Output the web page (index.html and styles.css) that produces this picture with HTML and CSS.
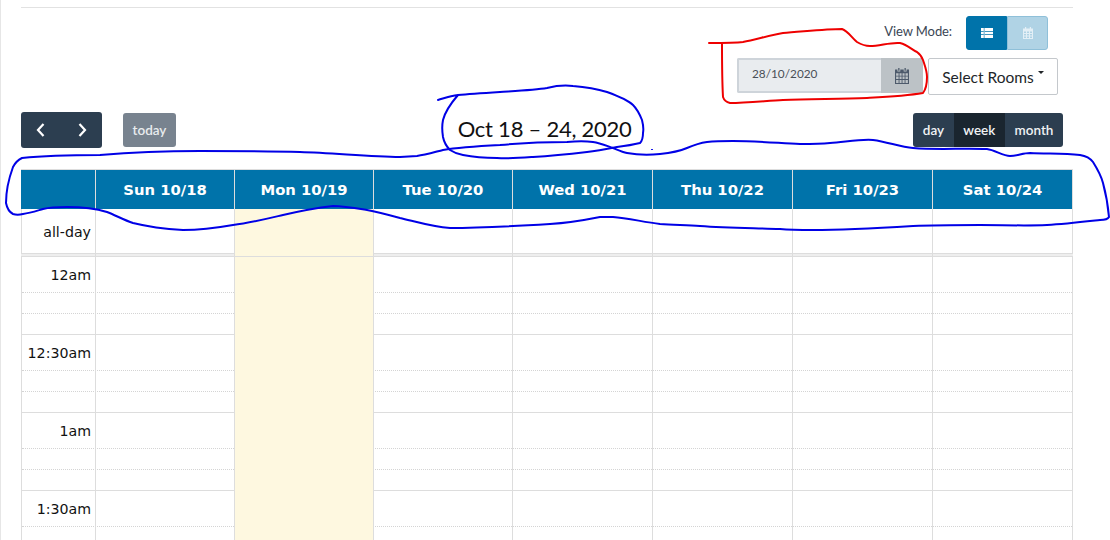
FILE: index.html
```html
<!DOCTYPE html>
<html lang="en">
<head>
<meta charset="utf-8">
<title>Room calendar</title>
<link rel="stylesheet" href="styles.css">
</head>
<body>
<div class="page">
  <div class="rule"></div>
  <div class="controls">
    <div class="view-row">
      <span class="view-label">View Mode:</span>
      <div class="view-group">
        <button class="view-btn active" aria-label="List">
          <svg class="icon" viewBox="0 0 12 10"><path d="M0 0h12v10H0zM0 3v.7h12V3zM0 6.300V7h12v-.7zM2.800 0v10h.6V0z" fill-rule="evenodd"/></svg>
        </button>
        <button class="view-btn inactive" aria-label="Calendar">
          <svg class="icon cal" viewBox="0 0 10 12"><path d="M2 0h1.200v1.500H6.800V0H8v1.500h2V12H0V1.500h2zM1 4.500v1.500h2V4.500zm3 0v1.500h2V4.500zm3 0v1.500h2V4.500zM1 7v1.500h2V7zm3 0v1.500h2V7zm3 0v1.500h2V7zM1 9.500V11h2V9.500zm3 0V11h2V9.500zm3 0V11h2V9.500z" fill-rule="evenodd"/></svg>
        </button>
      </div>
    </div>
    <div class="picker-row">
      <div class="date-picker">
        <span class="date-value">28/10/2020</span>
        <span class="date-addon">
          <svg class="addon-icon" viewBox="0 0 14 16"><path d="M3.200 0h1.300v2.800H3.200zM9.500 0h1.300v2.800H9.500zM0 1.500h2.400v2h2.900v-2h3.400v2h2.900v-2H14V16H0zM1.100 5.300v2.400h2.500V5.300zm3.400 0v2.400h2.100V5.300zm3 0v2.400h2.100V5.300zm3 0v2.400h2.400V5.300zM1.100 8.600v2.400h2.500V8.600zm3.400 0v2.400h2.100V8.600zm3 0v2.400h2.100V8.600zm3 0v2.400h2.400V8.600zM1.100 11.900v3h2.500v-3zm3.400 0v3h2.100v-3zm3 0v3h2.100v-3zm3 0v3h2.400v-3z" fill-rule="evenodd"/></svg>
        </span>
      </div>
      <button class="rooms-btn">Select Rooms<span class="caret"></span></button>
    </div>
  </div>
  <div class="toolbar">
    <div class="toolbar-left">
      <div class="nav-group">
        <button class="nav-btn" aria-label="Previous"><svg viewBox="0 0 10 16"><path d="M7.500 2 2 8l5.500 6"/></svg></button>
        <button class="nav-btn" aria-label="Next"><svg viewBox="0 0 10 16"><path d="m2.500 2 5.500 6-5.500 6"/></svg></button>
      </div>
      <button class="today-btn">today</button>
    </div>
    <h2 class="title">Oct 18 – 24, 2020</h2>
    <div class="range-group">
      <button class="range-btn">day</button>
      <button class="range-btn current">week</button>
      <button class="range-btn">month</button>
    </div>
  </div>
  <div class="calendar">
    <div class="cal-row head-row">
      <div class="head-cell"></div>
      <div class="head-cell">Sun 10/18</div>
      <div class="head-cell">Mon 10/19</div>
      <div class="head-cell">Tue 10/20</div>
      <div class="head-cell">Wed 10/21</div>
      <div class="head-cell">Thu 10/22</div>
      <div class="head-cell">Fri 10/23</div>
      <div class="head-cell">Sat 10/24</div>
    </div>
    <div class="cal-row allday-row">
      <div class="allday-label">all-day</div>
      <div class="day"></div>
      <div class="day today"></div>
      <div class="day"></div>
      <div class="day"></div>
      <div class="day"></div>
      <div class="day"></div>
      <div class="day"></div>
    </div>
    <div class="divider"></div>
    <div class="time-grid">
      <div class="slot major"><span class="time">12am</span></div>
      <div class="slot"></div>
      <div class="slot hour-end"></div>
      <div class="slot major"><span class="time">12:30am</span></div>
      <div class="slot"></div>
      <div class="slot hour-end"></div>
      <div class="slot major"><span class="time">1am</span></div>
      <div class="slot"></div>
      <div class="slot hour-end"></div>
      <div class="slot major"><span class="time">1:30am</span></div>
      <div class="slot"></div>
      <div class="slot hour-end"></div>
      <div class="columns">
        <div class="day"></div>
        <div class="day today"></div>
        <div class="day"></div>
        <div class="day"></div>
        <div class="day"></div>
        <div class="day"></div>
        <div class="day"></div>
      </div>
    </div>
  </div>
</div>
<svg class="scribbles" viewBox="0 0 1110 540" aria-hidden="true">
  <path class="ink-red" d="M709 43C720 43 735 43 743 42C755 40 770 35 783 33C800 32 825 29 842 29C848 31 852 38 857 42C862 45 866 46 870 46C880 46 890 42 900 43C908 45 912 50 917 52C921 55 922 57 923 60C925 66 927 71 927 77C927 84 926 89 923 93C905 96 885 97 867 98C840 99 810 99 783 100C765 101 745 103 730 103C726 102 724 100 723 97C722 80 722 60 722 43"/>
  <path class="ink-blue" d="M438 100C445 98 450 96 458 95C470 94 485 93 500 92C515 91 535 90 547 88C555 86 565 85 573 86C585 87 597 89 607 92C618 96 628 100 633 105C638 110 640 115 642 120C643 124 644 128 643 133C643 137 642 141 640 143C632 145 625 146 617 147C607 149 597 151 587 152C570 154 550 156 533 157C520 158 508 159 497 158C485 158 473 157 463 155C457 154 453 152 450 150C446 146 444 142 443 137C442 131 442 125 443 120C445 112 452 102 458 95"/>
  <path class="ink-blue" d="M22 158C50 155 75 155 100 155C135 152 165 151 200 151C235 151 270 151 300 152C335 153 370 157 400 157L417 156C425 155 435 152 443 150C460 147 480 146 500 145C522 143 545 142 567 142C577 141 586 141 593 142C600 143 607 146 613 148C618 150 622 152 627 153C638 155 650 155 660 154C670 153 680 151 687 148C694 145 700 143 707 142C716 141 725 141 733 141C755 141 778 143 800 144C810 144 820 144 830 143C845 142 860 139 873 140C888 142 900 147 913 148C938 150 962 148 987 149C995 150 1003 156 1010 156C1017 156 1023 153 1030 153C1047 154 1063 153 1080 155C1086 156 1090 158 1093 162C1098 170 1101 175 1103 183C1106 194 1108 206 1109 217C1108 219 1104 220 1100 220C1082 222 1065 224 1047 225C1025 226 1002 225 980 225C957 225 935 225 913 226C880 228 847 230 813 230C802 230 791 230 780 229C753 228 727 228 700 226C686 225 673 225 660 224C643 222 628 218 613 217C608 217 604 217 600 217C585 220 568 223 550 224C517 226 483 228 450 228C433 227 417 222 400 218C389 215 378 212 367 210C355 208 344 206 333 206C316 208 300 211 283 215C266 219 250 223 233 225C216 228 200 230 183 230C166 229 149 227 133 223C124 220 115 215 107 212C94 208 80 207 67 207C59 207 51 207 43 209C36 211 30 213 23 214C19 215 16 215 13 214C9 212 7 208 6 203C6 190 9 178 13 167C15 163 18 160 22 158"/>
  <path class="ink-dot" d="M651.500 149.500h1"/>
</svg>
</body>
</html>
```
FILE: styles.css
```css
* { box-sizing: border-box; }
html, body { margin: 0; padding: 0; background: #fff; }
body {
  height: 540px;
  overflow: hidden;
  position: relative;
  font-family: "Lato", "Noto Sans", sans-serif;
}
button { font-family: inherit; border: 0; padding: 0; margin: 0; cursor: pointer; }

.page {
  height: 540px;
  border-left: 1px solid #e6e6e6;
  padding: 7px 37px 0 20px;
  overflow: hidden;
}
.rule { height: 1px; background: #e2e2e2; }

.controls {
  display: flex;
  flex-direction: column;
  align-items: flex-end;
  padding-right: 15px;
  height: 104px;
}
.view-row {
  display: flex;
  align-items: center;
  margin-top: 8px;
  padding-right: 10px;
  height: 34px;
}
.view-label { font-size: 13px; color: #3a4654; margin: -4px 14px 0 0; letter-spacing: -0.1px; }
.view-group { display: flex; }
.view-btn {
  width: 41px;
  height: 34px;
  display: flex;
  align-items: center;
  justify-content: center;
  border: 1px solid #0073aa;
}
.view-btn.active { background: #0073aa; border-radius: 3px 0 0 3px; }
.view-btn.inactive { background: #b0d3e5; border-color: #8fc0d9; border-radius: 0 3px 3px 0; }
.icon { width: 12px; height: 10px; fill: #fff; }
.icon.cal { width: 10px; height: 12px; fill: #e3eff6; }

.picker-row { display: flex; align-items: flex-start; margin-top: 8px; }
.date-picker {
  width: 186px;
  height: 35px;
  display: flex;
  align-items: stretch;
  background: #e9ecef;
  border: 2px solid #ced4da;
  border-right: 0;
  border-radius: 2px 0 0 2px;
}
.date-value {
  flex: 1;
  font-size: 11.800px;
  color: #495057;
  line-height: 28px;
  padding-left: 13px;
}
.date-addon {
  width: 42px;
  margin: -2px 0;
  background: #bcc2c6;
  display: flex;
  align-items: center;
  justify-content: center;
}
.addon-icon { width: 14px; height: 16px; fill: #4d5a6b; }
.rooms-btn {
  width: 130px;
  height: 37px;
  margin-left: 5px;
  background: #fff;
  border: 1px solid #c4c8cc;
  border-radius: 2px;
  font-size: 15.500px;
  color: #212529;
  display: flex;
  align-items: center;
  justify-content: center;
}
.caret {
  width: 0;
  height: 0;
  margin: -9px 0 0 4px;
  border-top: 3px solid #212529;
  border-left: 3px solid transparent;
  border-right: 3px solid transparent;
}

.toolbar {
  display: flex;
  align-items: center;
  justify-content: space-between;
  height: 36px;
  padding-right: 10px;
}
.toolbar-left { display: flex; align-items: center; }
.nav-group {
  display: flex;
  width: 81px;
  height: 36px;
  background: #2c3e50;
  border-radius: 3px;
}
.nav-btn {
  width: 40.500px;
  background: transparent;
  display: flex;
  align-items: center;
  justify-content: center;
}
.nav-btn svg { width: 10px; height: 16px; fill: none; stroke: #fff; stroke-width: 2.200; }
.today-btn {
  width: 53px;
  height: 34px;
  margin-left: 21px;
  background: #78838f;
  color: #e9ecee;
  border-radius: 3px;
  font-size: 13.500px;
  font-weight: 600;
}
.title {
  margin: 0 0 3px;
  font-size: 22px;
  font-weight: 400;
  letter-spacing: -0.25px;
  color: #111;
  line-height: 34px;
}
.range-group { display: flex; height: 34px; border-radius: 3px; overflow: hidden; }
.range-btn {
  background: #2c3e50;
  color: #f1f3f5;
  font-size: 13.500px;
  font-weight: 600;
  padding: 0 9.600px;
}
.range-btn.current { background: #1a252f; }

.calendar {
  margin-top: 21px;
  border-right: 1px solid #ddd;
}
.cal-row {
  display: grid;
  grid-template-columns: 73px 139px 139px 139px 140px 140px 140px 140px;
}
.head-row {
  height: 40px;
  background: #0073aa;
  grid-template-columns: 74px 139px 139px 139px 140px 140px 140px 140px;
}
.head-cell {
  border: 1px solid #ddd;
  border-width: 1px 0 0 1px;
  color: #fff;
  font-family: "DejaVu Sans", Verdana, sans-serif;
  font-weight: 700;
  font-size: 14.800px;
  line-height: 40px;
  text-align: center;
  overflow: hidden;
  white-space: nowrap;
}
.head-cell:first-child { border-left: 0; }
.allday-row { height: 44px; border-left: 1px solid #ddd; }
.allday-label {
  font-family: "DejaVu Sans", Verdana, sans-serif;
  font-size: 14.200px;
  color: #111;
  text-align: right;
  padding-right: 4px;
  line-height: 47px;
}
.day { border-left: 1px solid #ddd; }
.today { background: #fef8e0; }
.divider {
  height: 4px;
  background: #eee;
  border: 1px solid #ddd;
  border-width: 1px 0;
  margin-right: -1px;
}
.time-grid {
  position: relative;
  border-left: 1px solid #ddd;
}
.slot {
  height: 21px;
  border-bottom: 1px dotted #d4d4d4;
}
.slot.major { height: 36px; }
.slot.hour-end { border-bottom: 1px solid #ddd; }
.time {
  display: block;
  width: 73px;
  padding-right: 4px;
  text-align: right;
  font-family: "DejaVu Sans", Verdana, sans-serif;
  font-size: 14.200px;
  line-height: 37px;
  color: #111;
}
.columns {
  position: absolute;
  top: 0;
  bottom: 0;
  left: 73px;
  right: 0;
  display: grid;
  grid-template-columns: 139px 139px 139px 140px 140px 140px 140px;
}

.scribbles {
  position: absolute;
  left: 0;
  top: 0;
  width: 1110px;
  height: 540px;
  pointer-events: none;
}
.scribbles path { fill: none; stroke-width: 2; stroke-linecap: round; stroke-linejoin: round; }
.ink-red { stroke: #ee0000; }
.ink-blue { stroke: #0000e6; }
.scribbles .ink-dot { stroke: #0000e6; stroke-width: 1; }
```
